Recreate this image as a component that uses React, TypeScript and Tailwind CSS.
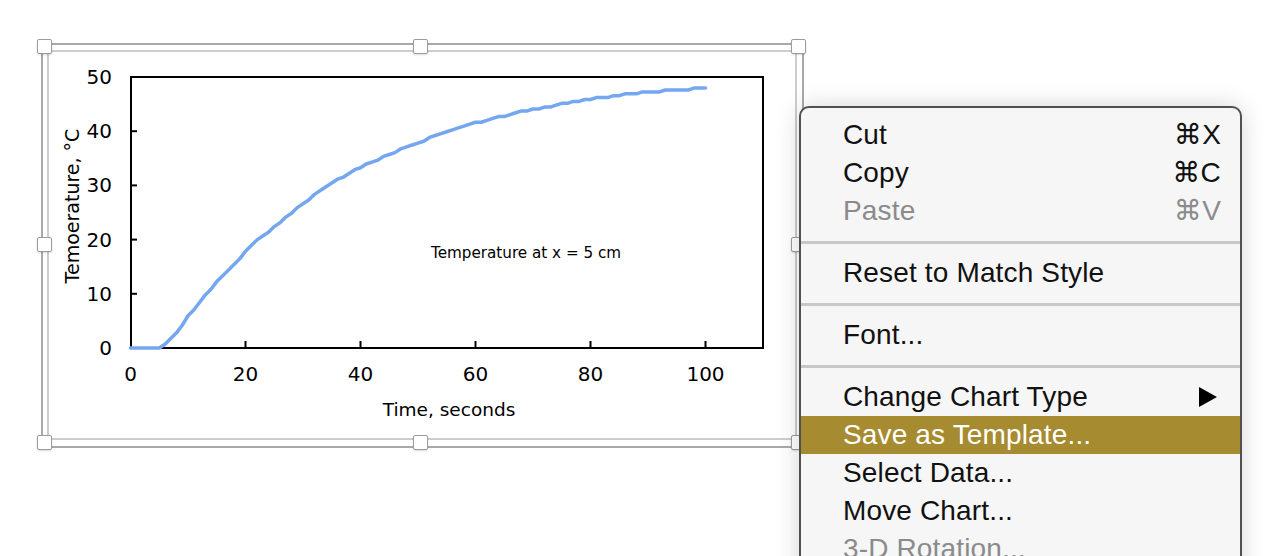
import React from "react";

// temperature samples: [seconds, °C]
const SAMPLES: [number, number][] = [
  [0, 0], [5, 0], [6, 0.6], [8, 2.8], [10, 5.8], [12, 8.5], [14, 10.9], [16, 13.3],
  [18, 15.5], [20, 17.7], [22, 19.9], [24, 21.4], [26, 23.2], [28, 24.9], [30, 26.6],
  [32, 28.2], [34, 29.6], [36, 31.0], [38, 32.2], [40, 33.3], [42, 34.3], [44, 35.3],
  [46, 36.2], [48, 37.1], [50, 37.9], [52, 38.7], [54, 39.4], [56, 40.1], [58, 40.8],
  [60, 41.5], [62, 42.1], [64, 42.6], [66, 43.1], [68, 43.6], [70, 44.0], [72, 44.4],
  [74, 44.8], [76, 45.2], [78, 45.6], [80, 45.9], [82, 46.2], [84, 46.5], [86, 46.8],
  [88, 47.0], [90, 47.2], [92, 47.4], [94, 47.6], [96, 47.7], [98, 47.8], [100, 48.0],
];

// resample every second and round the readings a little, like the logged data
const interp = (t: number) => {
  for (let i = 1; i < SAMPLES.length; i++) {
    const [t1, v1] = SAMPLES[i];
    const [t0, v0] = SAMPLES[i - 1];
    if (t <= t1) return v0 + ((t - t0) / (t1 - t0)) * (v1 - v0);
  }
  return SAMPLES[SAMPLES.length - 1][1];
};
const READINGS = Array.from({ length: 101 }, (_, t) => [t, Math.round(interp(t) / 0.35) * 0.35]);

const px = (t: number) => 130.5 + t * 5.75;
const py = (v: number) => 348 - v * 5.42;

const chartFont = '"DejaVu Sans", Verdana, sans-serif';

const Chart: React.FC = () => (
  <svg width={746} height={386} viewBox="49 52 746 386" className="block">
    <rect x={131} y={77} width={632} height={271} fill="none" stroke="#000" strokeWidth={2} />
    {[10, 20, 30, 40].map((v) => (
      <line key={v} x1={131} x2={137} y1={py(v)} y2={py(v)} stroke="#000" strokeWidth={2} />
    ))}
    {[20, 40, 60, 80, 100].map((t) => (
      <line key={t} x1={px(t)} x2={px(t)} y1={348} y2={341} stroke="#000" strokeWidth={2} />
    ))}
    {[0, 10, 20, 30, 40, 50].map((v) => (
      <text
        key={v}
        x={112}
        y={py(v) + 7}
        textAnchor="end"
        fontSize={20}
        fontFamily={chartFont}
        fill="#000"
      >
        {v}
      </text>
    ))}
    {[0, 20, 40, 60, 80, 100].map((t) => (
      <text
        key={t}
        x={px(t)}
        y={381}
        textAnchor="middle"
        fontSize={20}
        fontFamily={chartFont}
        fill="#000"
      >
        {t}
      </text>
    ))}
    <text x={449} y={416} textAnchor="middle" fontSize={18.5} fontFamily={chartFont} fill="#000">
      Time, seconds
    </text>
    <text
      x={0}
      y={0}
      transform="translate(79 206) rotate(-90)"
      textAnchor="middle"
      fontSize={19}
      fontFamily={chartFont}
      fill="#000"
    >
      Temoerature, °C
    </text>
    <text x={431} y={258} fontSize={15.2} fontFamily={chartFont} fill="#000">
      Temperature at x = 5 cm
    </text>
    <polyline
      points={READINGS.map(([t, v]) => `${px(t)},${py(v)}`).join(" ")}
      fill="none"
      stroke="#74a7ef"
      strokeWidth={3.5}
      strokeLinejoin="round"
      strokeLinecap="round"
    />
  </svg>
);

const Handle: React.FC<{ className: string }> = ({ className }) => (
  <div
    className={`absolute w-[15px] h-[15px] bg-white border border-[#9c9c9c] rounded-[2px] shadow-[0_1px_2px_rgba(0,0,0,0.15)] ${className}`}
  />
);

type Item =
  | { kind: "item"; label: string; shortcut?: string; disabled?: boolean; active?: boolean; submenu?: boolean }
  | { kind: "sep" };

const MENU: Item[] = [
  { kind: "item", label: "Cut", shortcut: "⌘X" },
  { kind: "item", label: "Copy", shortcut: "⌘C" },
  { kind: "item", label: "Paste", shortcut: "⌘V", disabled: true },
  { kind: "sep" },
  { kind: "item", label: "Reset to Match Style" },
  { kind: "sep" },
  { kind: "item", label: "Font..." },
  { kind: "sep" },
  { kind: "item", label: "Change Chart Type", submenu: true },
  { kind: "item", label: "Save as Template...", active: true },
  { kind: "item", label: "Select Data..." },
  { kind: "item", label: "Move Chart..." },
  { kind: "item", label: "3-D Rotation...", disabled: true },
];

const ContextMenu: React.FC = () => (
  <div className="absolute left-[799px] top-[106px] w-[443px] h-[520px] bg-[#f6f6f6] border-2 border-[#505050] rounded-[10px] pt-[8px] shadow-[0_0_24px_rgba(0,0,0,0.16)] font-['Liberation_Sans','DejaVu_Sans',sans-serif]">
    {MENU.map((item, i) =>
      item.kind === "sep" ? (
        <div key={i} className="h-[24px] flex items-center">
          <div className="h-[3px] w-full bg-[#c8c8c8]" />
        </div>
      ) : (
        <div
          key={i}
          className={`h-[38px] flex items-center justify-between pl-[42px] text-[28px] leading-[38px] tracking-[0.15px] ${
            item.active ? "bg-[#a68b30] text-white" : item.disabled ? "text-[#8b8b8b]" : "text-[#111]"
          } ${item.submenu ? "pr-[23px]" : "pr-[19px]"}`}
        >
          <span>{item.label}</span>
          {item.shortcut && <span>{item.shortcut}</span>}
          {item.submenu && (
            <svg width={18} height={20} viewBox="0 0 18 20">
              <polygon points="0,0 18,10 0,20" fill="#000" />
            </svg>
          )}
        </div>
      )
    )}
  </div>
);

export default function App() {
  return (
    <div className="relative w-[1282px] h-[556px] overflow-hidden bg-white">
      <div className="pl-[41px] pt-[43px]">
        <div className="relative w-[763px] border-2 border-[#a9a9a9] pt-[5px] pl-[4px] pr-[5px] pb-[6px]">
          <div className="border-2 border-[#cdcdcd] bg-white">
            <Chart />
          </div>
          <Handle className="left-[-6px] top-[-6px]" />
          <Handle className="left-[370px] top-[-6px]" />
          <Handle className="left-[748px] top-[-6px]" />
          <Handle className="left-[-6px] top-[192px]" />
          <Handle className="left-[748px] top-[192px]" />
          <Handle className="left-[-6px] top-[390px]" />
          <Handle className="left-[370px] top-[390px]" />
          <Handle className="left-[748px] top-[390px]" />
        </div>
      </div>
      <ContextMenu />
    </div>
  );
}
